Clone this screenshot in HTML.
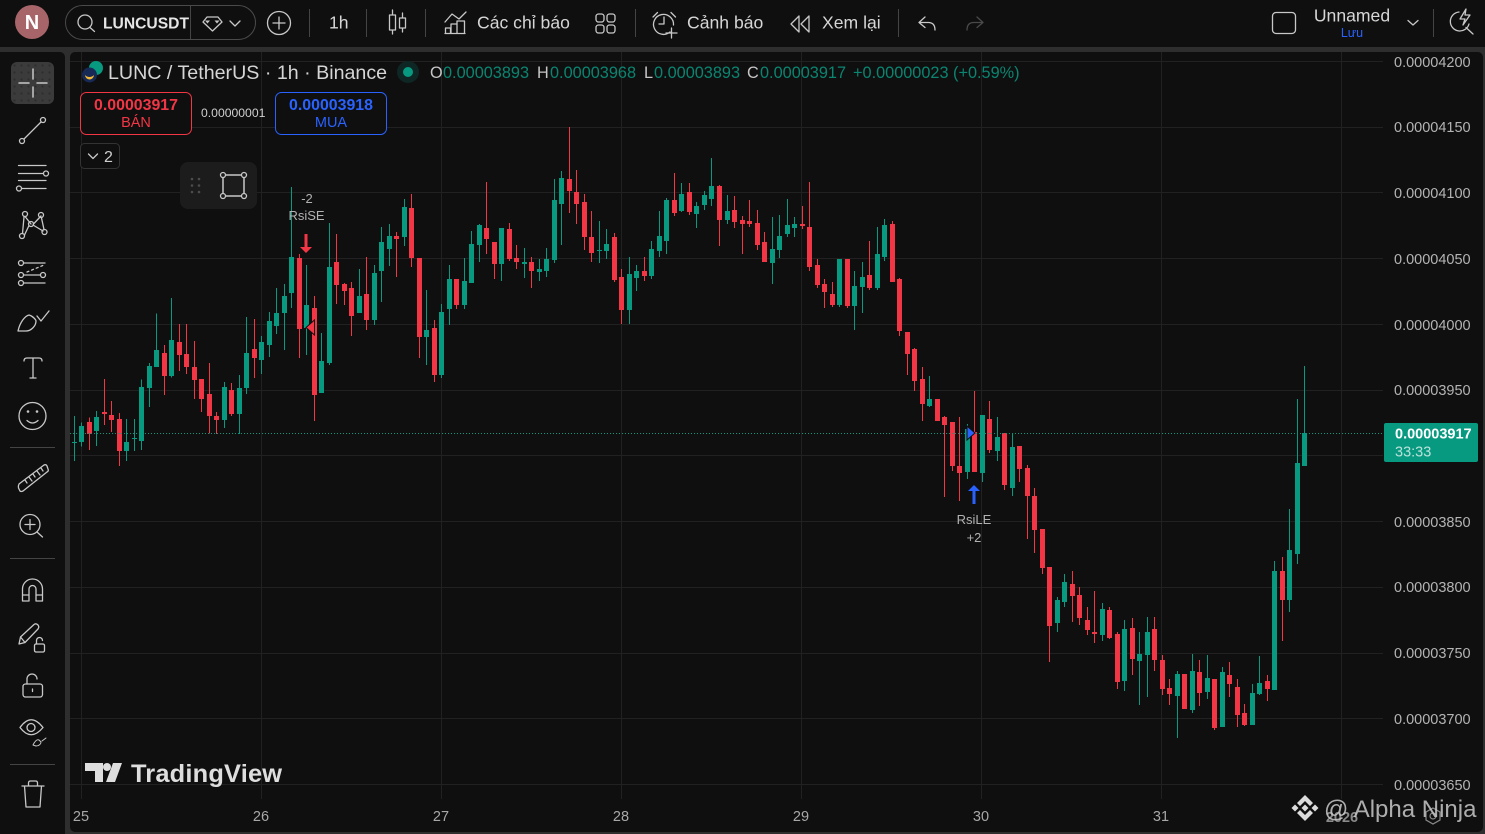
<!DOCTYPE html>
<html lang="vi"><head><meta charset="utf-8"><title>LUNCUSDT</title>
<style>
html,body{margin:0;padding:0;width:1485px;height:834px;overflow:hidden;background:#2e2e2e}
.top{position:absolute;left:0;top:0;width:1485px;height:47px;background:#0f0f0f}
.side{position:absolute;left:0;top:52px;width:65px;height:782px;background:#0f0f0f;border-top-right-radius:5px}
.chart{position:absolute;left:70px;top:52px;width:1413px;height:780px;background:#0f0f0f;border-radius:5px}
.sel{position:absolute;left:11px;top:62px;width:43px;height:42px;border-radius:6px;background-color:#3b3b3b;background-image:radial-gradient(#2d2d2d 1px,transparent 1.2px);background-size:7px 7px}
svg{position:absolute;left:0;top:0}
text{font-family:"Liberation Sans","Noto Sans CJK SC",sans-serif}
.t{fill:#d6d6d6;font-size:17.6px}
.p{fill:#b4b4b4;font-size:14.5px}
.x{fill:#a8a8a8;font-size:14.5px;text-anchor:middle}
.o{fill:#c6c6c6;font-size:16.3px}
.v{fill:#0a8571;font-size:16.3px}
.sig{fill:#b2b2b2;font-size:13px;text-anchor:middle}
.i{fill:none;stroke:#c8c8c8;stroke-width:1.3;stroke-linecap:round;stroke-linejoin:round}
.w{fill:none;stroke-width:3}
.b{fill:none;stroke-width:15}
.g{stroke:#089981}
.r{stroke:#f23645}
</style></head><body>
<div class="top"></div><div class="side"></div><div class="chart"></div><div class="sel"></div>
<svg width="1485" height="834" viewBox="0 0 1485 834">
<!-- grid -->
<path shape-rendering="crispEdges" stroke="#212121" stroke-width="1" fill="none" d="M70 61.5H1383M70 127.5H1383M70 192.5H1383M70 258.5H1383M70 324.5H1383M70 390.5H1383M70 455.5H1383M70 521.5H1383M70 587.5H1383M70 653.5H1383M70 718.5H1383M70 784.5H1383M81.5 52V799M261.5 52V799M441.5 52V799M621.5 52V799M801.5 52V799M981.5 52V799M1161.5 52V799M1341.5 52V799"/>
<!-- candles -->
<g shape-rendering="crispEdges">
<g transform="translate(70 180) scale(.33333)">
<path class="w g" d="M13 708V843M34 727V800M79 693V798M169 717V843M193 717V813M214 598V810M238 549V681M259 400V561M304 354V593M463 606V744M508 585V762M529 411V642M574 468V582M598 396V531M619 324V462M643 312V510M664 21V384M709 255V525M754 459V639M778 129V555M868 267V399"/>
<path class="b g" d="M13 786V789M34 738V786M79 711V753M169 786V813M193 774V777M214 621V783M238 558V624M259 510V561M304 480V588M463 621V720M508 624V702M529 519V624M574 486V540M598 423V495M619 399V438M643 348V399M664 231V339M709 375V444M754 543V639M778 261V549M868 348V399"/>
<path class="w r" d="M58 712V810M103 597V735M124 663V756M148 699V858M283 495V645M328 432V573M349 432V582M373 483V657M394 597V696M418 549V760M439 696V762M484 609V708M553 417V594M688 222V534M733 348V723M799 162V372M823 309V375M844 306V468M889 231V450"/>
<path class="b r" d="M58 726V762M103 696V702M124 705V720M148 717V813M283 519V588M328 486V525M349 522V561M373 561V600M394 597V657M418 642V708M439 708V720M484 630V702M553 507V534M688 234V447M733 384V645M799 246V315M823 312V333M844 324V408M889 342V420"/>
</g>
<g transform="translate(370 120) scale(.33333)">
<path class="w g" d="M13 435V615M34 321V546M58 312V438M103 237V378M169 510V735M214 552V774M238 435V615M283 414V567M304 333V489M328 312V426M394 324V483M463 384V474M508 417V483M529 384V471M553 177V429M574 153V375M688 303V429M709 327V417M778 411V612M799 435V513M844 363V477M868 273V411M889 234V402"/>
<path class="b g" d="M13 459V600M34 366V453M58 348V387M103 261V351M169 630V651M214 576V765M238 477V567M283 483V555M304 372V489M328 315V375M394 324V432M463 426V432M508 447V456M529 417V453M553 240V420M574 174V252M688 390V393M709 372V393M778 462V570M799 453V474M844 387V468M868 348V393M889 240V363"/>
<path class="w r" d="M79 336V471M124 222V441M148 414V714M193 600V786M259 477V567M349 186V402M373 366V477M418 309V423M439 375V447M484 411V504M598 21V279M619 150V312M643 222V390M664 273V426M733 339V486M754 447V612M823 411V483"/>
<path class="b r" d="M79 348V357M124 264V414M148 414V651M193 624V765M259 477V555M349 324V357M373 366V432M418 327V417M439 414V426M484 426V453M598 177V213M619 216V252M643 246V351M664 351V399M733 351V480M754 471V570M823 453V468"/>
</g>
<g transform="translate(660 150) scale(.33333)">
<path class="w g" d="M64 99V186M109 156V234M133 123V180M154 24V168M202 135V222M337 201V402M358 195V324M382 147V261M403 201V261M538 327V471M583 363V540M607 336V489M652 231V420M673 207V333M808 678V771"/>
<path class="b g" d="M64 132V183M109 168V192M133 135V165M154 108V147M202 183V210M337 297V339M358 258V300M382 225V252M403 222V234M538 327V465M583 408V468M607 381V411M652 312V414M673 225V321M808 747V768"/>
<path class="w r" d="M43 69V198M88 99V195M178 105V288M223 138V234M247 198V312M268 150V231M292 180V300M313 246V336M427 168V237M448 96V363M472 327V414M493 387V474M517 396V471M562 327V474M628 273V420M697 213V396M718 384V558M742 546V675M763 594V723M787 651V813M832 747V813"/>
<path class="b r" d="M43 150V189M88 126V186M178 108V210M223 180V216M247 210V222M268 213V222M292 219V285M313 276V336M427 222V228M448 231V351M472 345V405M493 402V426M517 432V465M562 327V468M628 375V414M697 222V396M718 387V543M742 546V612M763 597V693M787 687V762M832 747V813"/>
</g>
<g transform="translate(900 380) scale(.33333)">
<path class="w g" d="M202 132V297M247 105V306M292 111V243M337 159V348M472 651V756M493 582V681"/>
<path class="b g" d="M202 147V276M247 105V279M292 171V213M337 201V324M472 660V729M493 606V666"/>
<path class="w r" d="M133 108V351M157 126V273M178 111V363M223 33V276M268 63V219M313 159V330M358 198V306M382 255V477M403 324V519M427 447V582M448 561V846M517 573V726M538 621V735M562 681V765"/>
<path class="b r" d="M133 111V135M157 126V258M178 258V279M223 156V276M268 117V210M313 159V315M358 198V267M382 264V348M403 348V450M427 447V564M448 561V738M517 612V648M538 645V714M562 720V750"/>
</g>
<g transform="translate(1090 520) scale(.33333)">
<path class="w g" d="M37 249V363M103 300V513M148 336V555M172 291V531M262 453V654M307 402V579M352 405V537M397 441V621M487 492V615M508 408V525M553 123V510M598 -33V276M622 -363V132M643 -462V-162"/>
<path class="b g" d="M37 267V345M103 327V483M148 402V423M172 336V405M262 462V528M307 453V570M352 474V516M397 456V621M487 519V615M508 489V522M553 153V510M598 90V240M622 -171V102M643 -261V-162"/>
<path class="w r" d="M13 213V369M58 261V357M82 336V507M127 294V465M193 291V453M217 405V525M238 477V555M283 462V567M328 420V558M373 477V630M418 426V531M442 477V621M463 552V618M532 465V543M577 111V363"/>
<path class="b r" d="M13 336V342M58 270V354M82 342V486M127 324V417M193 327V420M217 420V507M238 504V522M283 462V567M328 456V519M373 477V624M418 465V492M442 501V585M463 579V615M532 483V507M577 153V240"/>
</g>
</g>
<!-- last price line -->
<path d="M70 433.5H1384" stroke="#089981" stroke-width="1" stroke-dasharray="1 2" fill="none"/>
<!-- signals -->
<path d="M314.5 320V335L306 327.5Z" fill="#f23645" stroke="#0f0f0f" stroke-width="1"/>
<path d="M967 426V440L975 433Z" fill="#2962ff" stroke="#0f0f0f" stroke-width="1"/>
<path d="M304.5 234h3v13h4.500l-6 6-6-6h4.500z" fill="#f23645"/>
<path d="M972.5 504v-13h-4.500l6-6 6 6h-4.500v13z" fill="#2962ff"/>
<text class="sig" x="307" y="203">-2</text><text class="sig" x="306.500" y="220">RsiSE</text>
<text class="sig" x="974" y="524">RsiLE</text><text class="sig" x="974" y="542">+2</text>
<!-- top bar -->
<circle cx="32" cy="22" r="17" fill="#a76569"/>
<text x="32" y="29" text-anchor="middle" font-size="20" font-weight="700" fill="#fff">N</text>
<rect x="65.500" y="5.500" width="190" height="34" rx="17" fill="none" stroke="#4a4a4a"/>
<path d="M190.500 6V39M309.500 9V37M366.500 9V37M425.500 9V37M635.500 9V37M898.500 9V37M1433.500 9V37" stroke="#444" fill="none"/>
<g class="i">
<circle cx="85" cy="22" r="7"/><path d="M90 27.500L94.500 31.500"/>
<path d="M207 17H218L222 22L212.500 31L203 22Z"/>
<path d="M230 21L235 26L240 21"/>
<circle cx="279" cy="23" r="11.500"/><path d="M273 23H285M279 17V29"/>
<path d="M389.500 15h6v15h-6zM392.500 10v5M392.500 30v4M399.500 18h6v10h-6zM402.500 13v5M402.500 28v4"/>
<path d="M445 22L452 14L459 19L466 12M445.500 33v-5h5v5M451 33V24h6v9M457 33V21h7.500v12M445 33.500H465"/>
<rect x="596" y="14" width="8" height="8" rx="2.500"/><rect x="607" y="14" width="8" height="8" rx="2.500"/><rect x="596" y="25" width="8" height="8" rx="2.500"/><rect x="607" y="25" width="8" height="8" rx="2.500"/>
<path d="M670 32A10 10 0 1 1 673.500 25M664 17V24H659M653 17L657.500 12.500M671 12.500L675.500 17M666 33H677M671.500 28V38"/>
<path d="M799 16V32L791 24ZM809 16V32L801 24Z"/>
<path d="M925 17L919 22.500L925 27.500M919 22.500H929Q935 23 935 30"/>
<path stroke="#4a4a4a" d="M977 17L983 22.500L977 27.500M983 22.500H973Q967 23 967 30"/>
<rect x="1272.500" y="12.500" width="23" height="21" rx="3.500"/>
<path d="M1408 20.500L1413 25L1418 20.500"/>
<path d="M1459 12A9.500 9.500 0 1 0 1469 24M1466 27.500L1473 34"/>
<path d="M1466 9L1460 19H1465L1463 25L1470 15H1465Z"/>
</g>
<path d="M205 20.500h5l-2.500 3zM214.500 20.500h5l-2.500 3z" fill="#c8c8c8"/>
<text x="103" y="28.500" font-size="16" font-weight="700" fill="#e6e6e6" textLength="86" lengthAdjust="spacingAndGlyphs">LUNCUSDT</text>
<text class="t" x="329" y="28.500">1h</text>
<text class="t" x="477" y="28.500">Các chỉ báo</text>
<text class="t" x="687" y="28.500">Cảnh báo</text>
<text class="t" x="822" y="28.500">Xem lại</text>
<text class="t" x="1352" y="21.500" text-anchor="middle">Unnamed</text>
<text x="1352" y="37" text-anchor="middle" font-size="12.500" fill="#2962ff">Lưu</text>
<!-- legend -->
<circle cx="96" cy="68" r="7" fill="#089981"/><circle cx="89.500" cy="75" r="7.500" fill="#172a55"/><path d="M85 75a4.500 4.500 0 0 0 9 0a6 6 0 0 1-9 0z" fill="#f4b731"/>
<text x="108" y="79" font-size="19.650" fill="#d6d6d6">LUNC / TetherUS · 1h · Binance</text>
<circle cx="408" cy="72" r="11" fill="#0e2724"/><circle cx="408" cy="72" r="5" fill="#089981"/>
<text class="o" x="430" y="78">O</text><text class="v" x="443" y="78">0.00003893</text>
<text class="o" x="537" y="78">H</text><text class="v" x="550" y="78">0.00003968</text>
<text class="o" x="644" y="78">L</text><text class="v" x="654" y="78">0.00003893</text>
<text class="o" x="747" y="78">C</text><text class="v" x="760" y="78">0.00003917</text>
<text class="v" x="853" y="78">+0.00000023 (+0.59%)</text>
<rect x="80.500" y="92.500" width="111" height="42" rx="6" fill="#0f0f0f" stroke="#f23645"/>
<rect x="275.500" y="92.500" width="111" height="42" rx="6" fill="#0f0f0f" stroke="#2962ff"/>
<text x="136" y="110" text-anchor="middle" font-size="15.900" font-weight="700" fill="#f23645">0.00003917</text>
<text x="136" y="127" text-anchor="middle" font-size="14.500" fill="#f23645">BÁN</text>
<text x="331" y="110" text-anchor="middle" font-size="15.900" font-weight="700" fill="#2962ff">0.00003918</text>
<text x="331" y="127" text-anchor="middle" font-size="14.500" fill="#2962ff">MUA</text>
<text x="201" y="117" font-size="12.200" fill="#d0d0d0">0.00000001</text>
<rect x="80.500" y="143.500" width="39" height="25" rx="4" fill="#0f0f0f" stroke="#333"/>
<path d="M88.500 154L93 158.500L97.500 154" class="i"/>
<text x="104" y="162" font-size="16" fill="#cfcfcf">2</text>
<!-- price axis -->
<g class="p">
<text x="1394" y="67">0.00004200</text><text x="1394" y="132">0.00004150</text><text x="1394" y="198">0.00004100</text><text x="1394" y="264">0.00004050</text><text x="1394" y="330">0.00004000</text><text x="1394" y="395">0.00003950</text><text x="1394" y="527">0.00003850</text><text x="1394" y="592">0.00003800</text><text x="1394" y="658">0.00003750</text><text x="1394" y="724">0.00003700</text><text x="1394" y="790">0.00003650</text>
</g>
<rect x="1384" y="423" width="94" height="39" rx="2" fill="#089981"/>
<text x="1395" y="438.500" font-size="14.500" font-weight="700" fill="#fff">0.00003917</text>
<text x="1395" y="456.500" font-size="14.500" fill="#b9e2da">33:33</text>
<!-- time axis -->
<text class="x" x="81" y="821">25</text><text class="x" x="261" y="821">26</text><text class="x" x="441" y="821">27</text><text class="x" x="621" y="821">28</text><text class="x" x="801" y="821">29</text><text class="x" x="981" y="821">30</text><text class="x" x="1161" y="821">31</text>
<text x="1342" y="822" text-anchor="middle" font-size="14.500" font-weight="700" fill="#8a8a8a">2026</text>
<path d="M1433 808L1440 812V820L1433 824L1426 820V812Z" fill="none" stroke="#8a8a8a" stroke-width="1.200"/><circle cx="1433" cy="816" r="3" fill="none" stroke="#8a8a8a" stroke-width="1.200"/>
<!-- TradingView logo -->
<path d="M85 763H103V782H95V771H85Z" fill="#dedede"/><circle cx="107" cy="767" r="4" fill="#dedede"/><path d="M113 763H122L115 782H106Z" fill="#dedede"/>
<text x="131" y="782" font-size="25.400" font-weight="700" fill="#dedede" textLength="151" lengthAdjust="spacing">TradingView</text>
<!-- left toolbar -->
<g class="i">
<path stroke-width="1.500" d="M33 69V79M33 87V97M19 83H29M37 83H47"/>
<circle cx="43" cy="120" r="2.500"/><circle cx="22" cy="141" r="2.500"/><path d="M41 122L24 139"/>
<path d="M18.500 165.500H46M18.500 173.500H43M18.500 180.500H46M22 188.500H46"/><circle cx="46" cy="173.500" r="2.500"/><circle cx="19" cy="188.500" r="2.500"/>
<circle cx="25" cy="214" r="2.500"/><circle cx="41" cy="215" r="2.500"/><circle cx="31" cy="224" r="2.500"/><circle cx="44.500" cy="232" r="2.500"/><circle cx="22" cy="236" r="2.500"/><path d="M25 216.500L31 224M33.500 224L41 216M33 225L43 231M24.500 235L29 225.500M24 217L22.500 233.500M41.500 218L44 229.500"/>
<circle cx="21" cy="263" r="2.500"/><circle cx="21" cy="275" r="2.500"/><circle cx="43" cy="275" r="2.500"/><circle cx="21" cy="283" r="2.500"/><path d="M23.500 263H45M23.500 275H40.500M23.500 283H45"/><path stroke-dasharray="2 3" d="M27 272L44 265"/>
<path d="M18 331C20 322 25 316 29 315C33 316 36 320 36 321C36 326 31 331 26 331ZM37 316L41 321L49 311"/>
<path d="M24 361Q24 358 27 358H39Q42 358 42 361M33 358V378M30 378H36"/>
<circle cx="32.500" cy="416" r="13.500"/><path d="M27 420.500Q32.500 425.500 38 420.500"/>
<path d="M18 484L43 465Q45 464 46 466L47 469Q48 471 46 472L22 491Q20 492 19 491L17.500 488Q17 486 18 484ZM24 480l2 3M28 477l3 4M32 474l2 3M36 471l3 4M40 468l2 3" transform="translate(1 0)"/>
<circle cx="30" cy="524.500" r="10"/><path d="M25 524.500H35M30 519.500V529.500M37 532L42.500 537"/>
<path d="M22.500 601V589A10 10 0 0 1 42.500 589V601H36V589A3.500 3.500 0 0 0 29 589V601ZM22.500 595H29M36 595H42.500"/>
<path d="M19 644L20.500 637L34 624.500Q36 623 38 625Q39.500 627 38 629L25 642.500ZM20.500 637L25 642.500"/>
<rect x="34.500" y="644" width="10" height="8" rx="1.500"/><path d="M36.500 644V640.500A3 3 0 0 1 42.500 640.500"/>
<rect x="23" y="684" width="19.500" height="13" rx="2.500"/><path d="M27 684V679A5 5 0 0 1 37 679"/><path d="M32.500 689V691.500"/>
<path d="M20 727.500Q31 712 43 727.500Q31 742 20 727.500Z"/><circle cx="31" cy="727.500" r="4"/>
<path d="M33 745C35 741 37 739 39 740L41 742C41 744 39 746 36 746ZM42 741L46 738" stroke-width="1"/>
<path d="M22 786H44M28.500 786V783Q28.500 781 30.500 781H35.500Q37.500 781 37.500 783V786M24.500 786L26 807H40L41.500 786"/>
</g>
<circle cx="28" cy="411.500" r="1.300" fill="#c8c8c8"/><circle cx="37" cy="411.500" r="1.300" fill="#c8c8c8"/>
<path d="M10 447.500H55M10 558.500H55M10 764.500H55" stroke="#444" fill="none"/>
<!-- floating toolbar -->
<rect x="180" y="162" width="77" height="47" rx="8" fill="#1c1c1c"/>
<g fill="#4c4c4c"><circle cx="192" cy="179" r="1.300"/><circle cx="199" cy="179" r="1.300"/><circle cx="192" cy="185.500" r="1.300"/><circle cx="199" cy="185.500" r="1.300"/><circle cx="192" cy="192" r="1.300"/><circle cx="199" cy="192" r="1.300"/></g>
<g class="i"><path d="M223 175H244M223 196H244M223 175V196M244 175V196" stroke-width="1.500"/></g>
<g fill="#1c1c1c" stroke="#c8c8c8" stroke-width="1.300"><circle cx="223" cy="175" r="2.500"/><circle cx="244" cy="175" r="2.500"/><circle cx="223" cy="196" r="2.500"/><circle cx="244" cy="196" r="2.500"/></g>
<!-- watermark -->
<g fill="#dcdcdc"><path d="M1305 795L1313 803L1310 806L1305 801L1300 806L1297 803Z"/><path d="M1305 821L1313 813L1310 810L1305 815L1300 810L1297 813Z"/><path d="M1305 804.500L1308.500 808L1305 811.500L1301.500 808Z"/><path d="M1295 804.500L1298.500 808L1295 811.500L1291.500 808Z"/><path d="M1315 804.500L1318.500 808L1315 811.500L1311.500 808Z"/></g>
<text x="1324" y="817" font-size="24" fill="#c9c9c9" fill-opacity=".85">@ Alpha Ninja</text>
</svg>
</body></html>
